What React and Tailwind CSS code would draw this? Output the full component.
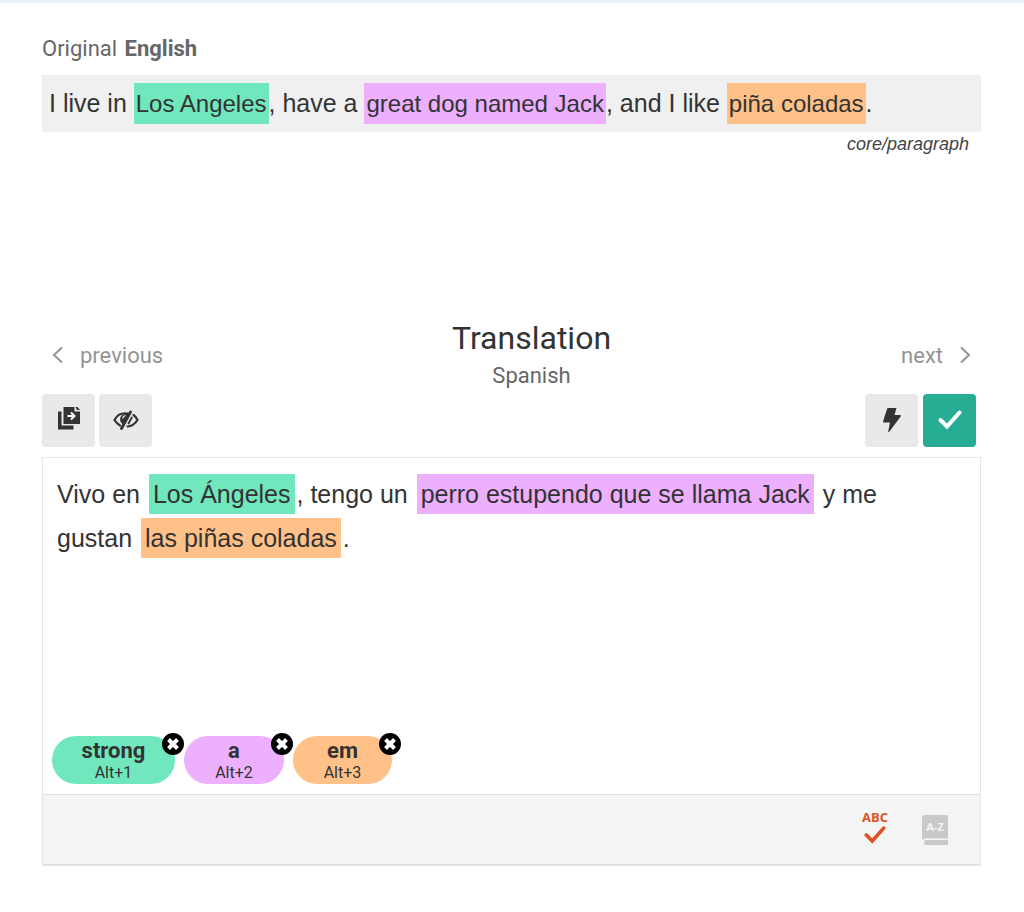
import React, { useState } from 'react';

const TAGS = [
  { name: 'strong', shortcut: 'Alt+1', color: 'bg-[#71e7be]', width: 'w-[123px]' },
  { name: 'a', shortcut: 'Alt+2', color: 'bg-[#ecb0ff]', width: 'w-[100px]' },
  { name: 'em', shortcut: 'Alt+3', color: 'bg-[#ffc187]', width: 'w-[99px]' },
];

const CopyIcon = () => (
  <svg width="24" height="26" viewBox="0 0 24 26" aria-hidden="true">
    <path d="M1 4.500h3.500v14h12v4H1z" fill="#333" />
    <path d="M6.500 0h11v4.500H23V17H6.500z" fill="#333" />
    <path d="M18.500 0h2l2.500 3h-3z" fill="#333" />
    <path d="M10.500 9h6.500M14 5.500L17.500 9 14 12.500" fill="none" stroke="#fff" strokeWidth="2" />
  </svg>
);

const HiddenIcon = () => (
  <svg width="26" height="20" viewBox="0 0 26 20" aria-hidden="true">
    <path
      d="M15 3.500C9 2.500 4 5 1.500 10c1.500 2.500 3 4 5.500 5.500M20.500 5c2 1.300 3.200 3 4 5-2.500 4-6 6.200-10 6.500"
      fill="none"
      stroke="#333"
      strokeWidth="2.2"
      strokeLinecap="round"
    />
    <path d="M16 3.500C8.500 3.500 6 7 7.500 11.500l2 3z" fill="#333" />
    <path d="M12.500 5.500C10.500 6 9.800 7 9.800 8.500" fill="none" stroke="#e9e9e9" strokeWidth="1.2" />
    <path d="M17.500 2L8.500 18.500" stroke="#333" strokeWidth="2.8" strokeLinecap="round" />
    <path d="M18.800 7.500L15.500 13.500" stroke="#333" strokeWidth="1.8" strokeLinecap="round" />
  </svg>
);

const BoltIcon = () => (
  <svg width="20" height="26" viewBox="0 0 20 26" aria-hidden="true">
    <path
      d="M6 1h8.500L12.500 8H18q1.500 0 .7 1.500L7.500 24.500q-1.500 1.500-1.200-.5L8 15.500H2q-1.500 0-.8-1.500L5 2q.3-1 1-1z"
      fill="#333"
    />
  </svg>
);

const CheckIcon = ({ color, size, width = 4 }) => (
  <svg width={size} height={size} viewBox="0 0 24 24" aria-hidden="true">
    <path d="M2.500 12l6.500 6.500L21.500 4.500" fill="none" stroke={color} strokeWidth={width} strokeLinecap="round" />
  </svg>
);

const Chevron = ({ right }) => (
  <svg width="12" height="20" viewBox="0 0 12 20" fill="none" stroke="#949494" strokeWidth="2" aria-hidden="true">
    <path d={right ? 'M2 1.500l8 7.500-8 7.500' : 'M10 1.500L2 9l8 7.500'} />
  </svg>
);

const DictionaryIcon = () => (
  <svg width="26" height="30" viewBox="0 0 26 30" aria-hidden="true">
    <path d="M3 0h21q2 0 2 2v21.500H4q-3 0-4 2V3q0-3 3-3z" fill="#c9c9c9" />
    <path d="M4.500 25H26v5H4.500q-2.500 0-2.500-2.500T4.500 25z" fill="#c9c9c9" />
    <text x="13" y="16" textAnchor="middle" fill="#f4f4f4" className="font-['Open_Sans',sans-serif] text-[11px] font-bold">
      A-Z
    </text>
  </svg>
);

const Mark = ({ color, small, children }) => (
  <span className={`${color} ${small ? 'px-0.5 py-[7px] text-[24px]' : 'mx-0.5 px-1 py-1.5 text-[25px]'}`}>{children}</span>
);

const ToolButton = ({ label, primary, children }) => (
  <button
    type="button"
    aria-label={label}
    className={`flex h-[53px] w-[53px] items-center justify-center rounded-[4px] pb-0.5 ${primary ? 'bg-[#26ad93]' : 'bg-[#e9e9e9]'}`}
  >
    {children}
  </button>
);

function App() {
  const [tags, setTags] = useState(TAGS);

  const removeTag = (name) => {
    setTags(tags.filter((tag) => tag.name !== name));
  };

  return (
    <main className="border-t-[3px] border-[#e9f2f6] bg-white pt-[31px] pr-[43px] pb-[46px] pl-[42px] font-[Roboto,sans-serif] text-[#333]">
      <section>
        <h2 className="text-[22px] leading-[30px] text-[#666]">
          Original <strong className="ml-0.5 font-bold">English</strong>
        </h2>
        <p className="mt-[11px] bg-[#f0f0f0] px-[7px] font-['Liberation_Sans',Arial,sans-serif] text-[25px] leading-[57px]">
          I live in <Mark color="bg-[#71e7be]" small>Los Angeles</Mark>, have a{' '}
          <Mark color="bg-[#ecb0ff]" small>great dog named Jack</Mark>, and I like{' '}
          <Mark color="bg-[#ffc187]" small>piña coladas</Mark>.
        </p>
        <p className="pr-3 text-right font-['Liberation_Sans',Arial,sans-serif] text-[18px] leading-6 text-[#444] italic">
          core/paragraph
        </p>
      </section>

      <section className="mt-[162px]">
        <div className="grid grid-cols-3 items-center">
          <button type="button" className="flex items-center gap-4 justify-self-start pl-[10px] text-[22px] leading-7 text-[#949494]">
            <Chevron />
            previous
          </button>
          <div className="pl-10 text-center">
            <h1 className="text-[32px] leading-10">Translation</h1>
            <p className="text-[22px] leading-[36px] text-[#666]">Spanish</p>
          </div>
          <button type="button" className="flex items-center gap-4 justify-self-end pr-[10px] text-[22px] leading-7 text-[#949494]">
            next
            <Chevron right />
          </button>
        </div>

        <div className="flex justify-between pr-[5px]">
          <div className="flex gap-1">
            <ToolButton label="Copy original"><CopyIcon /></ToolButton>
            <ToolButton label="Toggle markup"><HiddenIcon /></ToolButton>
          </div>
          <div className="flex gap-[5px]">
            <ToolButton label="Auto translate"><BoltIcon /></ToolButton>
            <ToolButton label="Confirm translation" primary><CheckIcon color="#fff" size={24} /></ToolButton>
          </div>
        </div>

        <div className="mt-[10px] border border-[#e6e6e6]">
          <div
            contentEditable
            suppressContentEditableWarning
            spellCheck={false}
            role="textbox"
            aria-label="Translation"
            className="min-h-[276px] pt-[14px] pr-14 pl-[14px] font-['Liberation_Sans',Arial,sans-serif] text-[25px] leading-[44px] outline-none"
          >
            <span>Vivo en </span>
            <Mark color="bg-[#71e7be]">Los Ángeles</Mark>
            <span>, tengo un </span>
            <Mark color="bg-[#ecb0ff]">perro estupendo que se llama Jack</Mark>
            <span> y me </span>
            <span>gustan </span>
            <Mark color="bg-[#ffc187]">las piñas coladas</Mark>
            <span>.</span>
          </div>

          <div className="flex h-[60px] gap-[9px] px-[9px] pt-0.5">
            {tags.map((tag) => (
              <div key={tag.name} className={`relative h-12 ${tag.width}`}>
                <button type="button" className={`flex h-12 w-full flex-col items-center rounded-full pt-[3px] ${tag.color}`}>
                  <strong className="text-[22px] leading-6 font-bold">{tag.name}</strong>
                  <span className="text-[16px] leading-5">{tag.shortcut}</span>
                </button>
                <button
                  type="button"
                  aria-label={`Remove ${tag.name}`}
                  onClick={() => removeTag(tag.name)}
                  className="absolute -top-[3px] -right-[9px] flex h-[22px] w-[22px] items-center justify-center rounded-full bg-black"
                >
                  <svg width="12" height="12" viewBox="0 0 12 12" stroke="#fff" strokeWidth="4" aria-hidden="true">
                    <path d="M1.500 1.500l9 9M10.500 1.500l-9 9" />
                  </svg>
                </button>
              </div>
            ))}
          </div>

          <div className="flex h-[71px] items-center justify-end gap-[34px] border-t border-b border-[#e0e0e0] bg-[#f4f4f4] pr-8">
            <button type="button" aria-label="Spell check" className="flex flex-col items-center pb-1">
              <span className="font-['Open_Sans',sans-serif] text-[13px] leading-[14px] font-bold text-[#de5328]">ABC</span>
              <CheckIcon color="#de5328" size={22} />
            </button>
            <button type="button" aria-label="Dictionary">
              <DictionaryIcon />
            </button>
          </div>
        </div>
      </section>
    </main>
  );
}

export default App;
